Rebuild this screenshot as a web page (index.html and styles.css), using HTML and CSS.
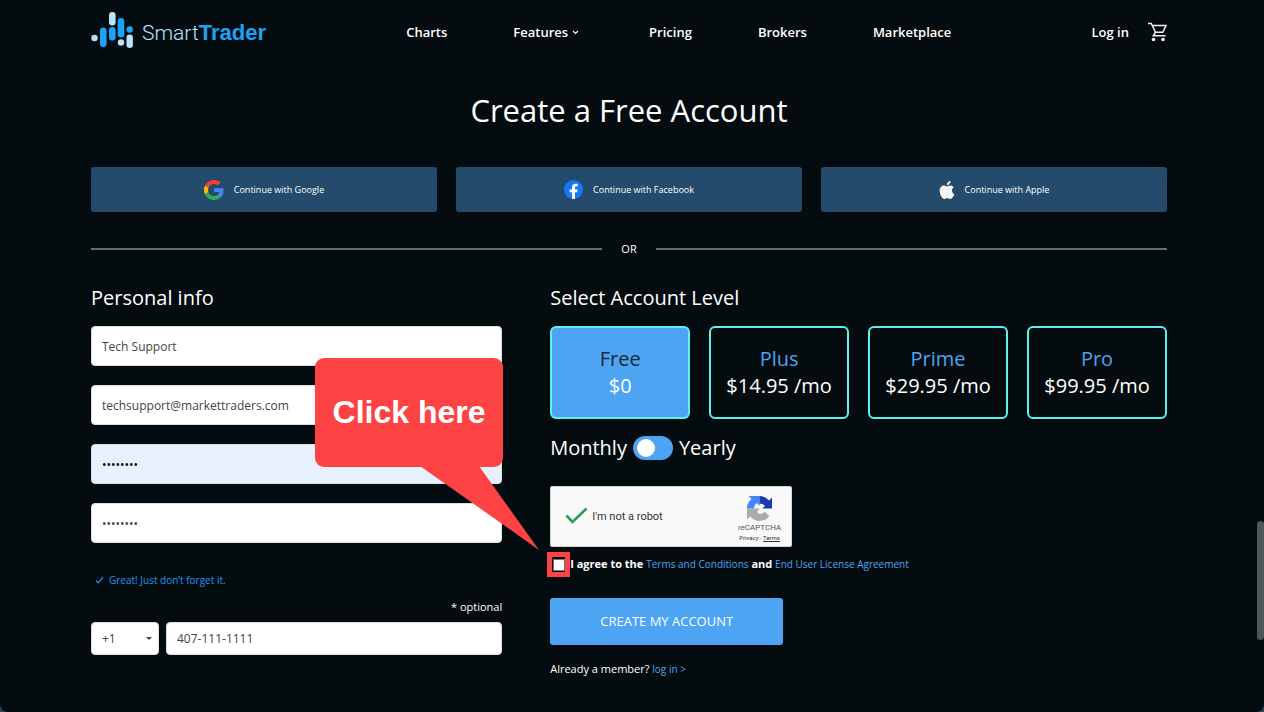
FILE: index.html
```html
<!DOCTYPE html>
<html lang="en">

<head>
    <meta charset="UTF-8">
    <meta name="viewport" content="width=device-width, initial-scale=1.0">
    <title>SmartTrader - Create a Free Account</title>
    <link rel="stylesheet" href="styles.css">
</head>

<body>

    <div class="page">
        <header class="header">
            <a href="#" class="logo">
                <svg width="42" height="36" viewBox="0 0 42 36" aria-hidden="true">
                    <g fill="#b9e2fd">
                        <circle cx="3.5" cy="26" r="3.2" />
                        <rect x="18" y="0" width="6.6" height="13.5" rx="3.3" />
                        <circle cx="30" cy="30.5" r="3.2" />
                        <rect x="35.5" y="22.5" width="6.4" height="13.5" rx="3.2" />
                    </g>
                    <g fill="#1ea1f8">
                        <rect x="9" y="15.5" width="6.6" height="19.5" rx="3.3" />
                        <rect x="18" y="15" width="6.6" height="13.5" rx="3.3" />
                        <rect x="26.7" y="6" width="6.6" height="19.5" rx="3.3" />
                        <circle cx="38.7" cy="17.5" r="3.2" />
                    </g>
                </svg>
                <span class="logo-text"><span class="logo-light">Smart</span><b>Trader</b></span>
            </a>
            <nav class="nav">
                <a href="#">Charts</a>
                <a href="#" class="has-menu">Features
                    <svg width="7" height="5" viewBox="0 0 7 5" aria-hidden="true"><path d="M1 1l2.5 2.5L6 1" fill="none" stroke="#fff" stroke-width="1.1" /></svg>
                </a>
                <a href="#">Pricing</a>
                <a href="#">Brokers</a>
                <a href="#">Marketplace</a>
            </nav>
            <div class="user-links">
                <a href="#">Log in</a>
                <a href="#" class="cart" aria-label="Cart">
                    <svg width="19" height="20" viewBox="0 0 19 20" fill="none" stroke="#f2f2f2" stroke-width="1.5" aria-hidden="true">
                        <path d="M0 1.5h3.3l4.2 8.800h7.300l3.200-6.800H4.300M7.300 10.500l-2 3.300h12.200" />
                        <circle cx="5.500" cy="17.500" r="1.800" fill="#f2f2f2" stroke="none" />
                        <circle cx="15" cy="17.500" r="1.800" fill="#f2f2f2" stroke="none" />
                    </svg>
                </a>
            </div>
        </header>

        <main class="main">
            <h1>Create a Free Account</h1>

            <div class="social">
                <button type="button">
                    <svg width="20" height="20" viewBox="0 0 48 48" aria-hidden="true">
                        <path fill="#ea4335" d="M24 9.500c3.540 0 6.710 1.220 9.210 3.600l6.850-6.850C35.900 2.380 30.470 0 24 0 14.620 0 6.510 5.380 2.560 13.220l7.980 6.190C12.430 13.720 17.740 9.500 24 9.500z" />
                        <path fill="#4285f4" d="M46.980 24.550c0-1.570-.15-3.090-.38-4.550H24v9.020h12.940c-.58 2.960-2.260 5.480-4.780 7.180l7.730 6c4.510-4.180 7.090-10.360 7.090-17.650z" />
                        <path fill="#fbbc05" d="M10.530 28.590A14.500 14.500 0 0 1 9.770 24c0-1.600.27-3.140.76-4.590l-7.980-6.190A23.900 23.900 0 0 0 0 24c0 3.880.92 7.540 2.560 10.780l7.970-6.190z" />
                        <path fill="#34a853" d="M24 48c6.480 0 11.930-2.130 15.890-5.810l-7.730-6c-2.150 1.450-4.920 2.300-8.160 2.300-6.260 0-11.570-4.220-13.470-9.910l-7.980 6.190C6.510 42.620 14.620 48 24 48z" />
                    </svg>
                    Continue with Google
                </button>
                <button type="button">
                    <svg width="19" height="19" viewBox="0 0 24 24" aria-hidden="true">
                        <circle cx="12" cy="12" r="12" fill="#1877f2" />
                        <path fill="#fff" d="M16.670 15.470l.53-3.470h-3.330V9.750c0-.95.470-1.880 1.960-1.880h1.510V4.920s-1.370-.24-2.690-.24c-2.740 0-4.530 1.660-4.530 4.670V12H7.080v3.470h3.050v8.390a12.100 12.100 0 0 0 3.750 0v-8.390h2.790z" />
                    </svg>
                    Continue with Facebook
                </button>
                <button type="button">
                    <svg width="16" height="18" viewBox="0 0 814 1000" aria-hidden="true">
                        <path fill="#f4f4f4" d="M788 341c-6 4-108 62-108 190 0 149 130 201 134 203-1 3-21 72-69 142-43 62-88 124-156 124s-86-40-165-40c-77 0-104 41-166 41s-106-57-156-127C44 792 0 667 0 548 0 357 124 256 247 256c65 0 119 43 160 43 39 0 100-45 174-45 28 0 130 2 197 97zM554 159c31-37 53-88 53-139 0-7-1-14-2-20-50 2-110 34-147 76-28 32-55 83-55 135 0 8 1 16 2 18 3 1 8 1 14 1 45 0 102-30 135-71z" />
                    </svg>
                    Continue with Apple
                </button>
            </div>

            <div class="divider">OR</div>

            <form class="columns">
                <section class="personal">
                    <h2>Personal info</h2>
                    <div class="fields">
                        <input type="text" aria-label="Name" value="Tech Support">
                        <input type="email" aria-label="Email" value="techsupport@markettraders.com">
                        <input type="password" class="filled" aria-label="Password" value="12345678">
                        <input type="password" aria-label="Confirm password" value="12345678">
                    </div>
                    <p class="hint">
                        <svg width="9" height="8" viewBox="0 0 9 8" aria-hidden="true"><path d="M1 4.500l2.200 2.300L8 1" fill="none" stroke="#2196f3" stroke-width="1.200" /></svg>
                        Great! Just don’t forget it.
                    </p>
                    <label class="optional" for="phone">* optional</label>
                    <div class="phone">
                        <select aria-label="Country code">
                            <option>+1</option>
                        </select>
                        <input type="tel" id="phone" value="407-111-1111">
                    </div>
                </section>

                <section class="account">
                    <h2>Select Account Level</h2>
                    <div class="levels">
                        <label class="level active">
                            <input type="radio" name="level" checked>
                            <span class="level-name">Free</span>
                            <span>$0</span>
                        </label>
                        <label class="level">
                            <input type="radio" name="level">
                            <span class="level-name">Plus</span>
                            <span>$14.95 /mo</span>
                        </label>
                        <label class="level">
                            <input type="radio" name="level">
                            <span class="level-name">Prime</span>
                            <span>$29.95 /mo</span>
                        </label>
                        <label class="level">
                            <input type="radio" name="level">
                            <span class="level-name">Pro</span>
                            <span>$99.95 /mo</span>
                        </label>
                    </div>

                    <div class="period">
                        <span>Monthly</span>
                        <input type="checkbox" class="switch" id="yearly">
                        <label for="yearly">Yearly</label>
                    </div>

                    <div class="captcha">
                        <label class="robot">
                            <input type="checkbox" checked>
                            <svg width="23" height="20" viewBox="0 0 23 20" aria-hidden="true"><path d="M1.500 8.500l6 6.500L21.500 1.500" fill="none" stroke="#2a9d5c" stroke-width="2.600" /></svg>
                            I'm not a robot
                        </label>
                        <div class="captcha-brand">
                            <svg width="25" height="25" viewBox="0 0 64 64" aria-hidden="true">
                                <path fill="#1c3aa9" d="M64 32V4l-7.700 7.700A32 32 0 0 0 31.600 0v20.400c3-.9 10.500-1.300 14.200 4.900L39 32z" />
                                <path fill="#4285f4" d="M31.900 0H4l7.700 7.700A32 32 0 0 0 0 32h18.700c-.4-3.800.5-10.400 6.300-13.900l7 7.400z" />
                                <path fill="#ababab" d="M0 31.900V60l7.700-7.700c13.500 15.900 37.500 14.700 49.200-.6L44.600 39.600c-4.700 8.200-14 8.300-19.300 1.300l6.900-9z" />
                            </svg>
                            <span class="brand-name">reCAPTCHA</span>
                            <span class="brand-links"><a href="#">Privacy</a> - <a href="#" class="terms">Terms</a></span>
                        </div>
                    </div>

                    <div class="agree">
                        <span class="agree-box"><input type="checkbox" id="agree"></span>
                        <p><label for="agree">I agree to the</label> <a href="#">Terms and Conditions</a> and <a href="#">End User License Agreement</a></p>
                    </div>

                    <button type="submit" class="submit">CREATE MY ACCOUNT</button>
                    <p class="member">Already a member? <a href="#">log in &gt;</a></p>
                </section>

                <!-- tooltip pointing at the agreement checkbox -->
                <div class="callout">
                    <div class="callout-text">Click here</div>
                    <svg class="callout-tail" width="119" height="84" viewBox="0 0 119 84" aria-hidden="true"><path d="M0 0h59l60 84z" fill="#fd4343" /></svg>
                </div>
            </form>
        </main>
        <div class="scroll-thumb"></div>
    </div>

</body>

</html>
```
FILE: styles.css
```css
* {
    margin: 0;
    padding: 0;
    box-sizing: border-box;
}

html {
    background: #2c4454;
}

body {
    font-family: "Open Sans", "Noto Sans", sans-serif;
    color: #fff;
    overflow: hidden;
}

a {
    color: #4ca4f3;
    text-decoration: none;
}

button,
input,
select {
    font-family: inherit;
}

svg {
    display: block;
    flex: none;
}

.page {
    min-height: 100vh;
    padding-right: 6px;
    background: #050c0f;
    border-radius: 0 0 8px 8px;
}

.header,
.main {
    width: 86%;
    max-width: 1076px;
    margin: 0 auto;
}

/* header */
.header {
    display: flex;
    align-items: center;
    height: 64px;
}

.header a {
    color: #fff;
    font-size: 13px;
    font-weight: 600;
}

.header .logo {
    display: flex;
    align-items: center;
    gap: 9px;
    height: 60px;
    align-self: flex-start;
}

.logo-text {
    padding-top: 6px;
    font-family: "Liberation Sans", Arial, sans-serif;
    font-size: 22px;
    color: #1ea1f8;
    font-weight: bold;
}

.logo-light {
    font-family: Roboto, sans-serif;
    font-size: 21px;
    font-weight: 300;
    color: #b9e2fd;
}

.nav {
    display: flex;
    flex: 1;
    justify-content: center;
    gap: 66px;
}

.has-menu {
    display: flex;
    align-items: center;
    gap: 4px;
    padding-right: 4px;
}

.user-links {
    display: flex;
    align-items: center;
    gap: 19px;
}

/* title */
h1 {
    padding: 24px 0 26px;
    font-size: 31px;
    line-height: 44px;
    font-weight: 400;
    text-align: center;
}

h2 {
    margin-bottom: 14px;
    font-size: 20px;
    line-height: 28px;
    font-weight: 400;
}

/* social buttons */
.social {
    display: grid;
    grid-template-columns: repeat(3, 1fr);
    gap: 19px;
    margin-top: 9px;
}

.social button {
    display: flex;
    align-items: center;
    justify-content: center;
    gap: 10px;
    height: 45px;
    border: none;
    border-radius: 3px;
    background: #244b6c;
    color: #fff;
    font-size: 9px;
    cursor: pointer;
}

.divider {
    display: flex;
    align-items: center;
    gap: 19px;
    margin: 29px 0 27px;
    font-size: 11px;
    line-height: 16px;
}

.divider::before,
.divider::after {
    content: "";
    flex: 1;
    height: 2px;
    background: #686c6d;
}

/* form */
.columns {
    position: relative;
    display: grid;
    grid-template-columns: 2fr 3fr;
    gap: 48px;
}

.fields {
    display: grid;
    gap: 19px;
}

.personal input,
.personal select {
    width: 100%;
    height: 40px;
    padding: 0 10px;
    border: 1px solid #dcdfe0;
    border-radius: 4px;
    background: #fff;
    color: #444;
    font-size: 12px;
}

.personal .filled {
    background: #e8effd;
    color: #000;
}

.hint {
    display: flex;
    align-items: center;
    gap: 5px;
    margin: 30px 0 12px 4px;
    color: #2196f3;
    font-size: 10px;
    line-height: 14px;
}

.optional {
    display: block;
    margin-bottom: 7px;
    font-size: 11px;
    line-height: 16px;
    text-align: right;
}

.phone {
    display: flex;
    gap: 7px;
}

.phone input,
.phone select {
    height: 33px;
}

.personal select {
    width: 68px;
    flex: none;
    appearance: none;
    background: #fff url("data:image/svg+xml,%3Csvg xmlns='http://www.w3.org/2000/svg' width='6' height='3'%3E%3Cpath d='M0 0h6L3 3z' fill='%23444'/%3E%3C/svg%3E") no-repeat right 6px center;
}

/* account level */
.levels {
    display: grid;
    grid-template-columns: repeat(4, 1fr);
    gap: 19px;
}

.level {
    display: flex;
    flex-direction: column;
    align-items: center;
    justify-content: center;
    height: 93px;
    padding-bottom: 2px;
    border: 2px solid #5df0ef;
    border-radius: 6px;
    font-size: 20px;
    line-height: 27px;
    white-space: nowrap;
    cursor: pointer;
}

.level input,
.robot input {
    position: absolute;
    opacity: 0;
}

.level-name {
    color: #4ca4f3;
}

.level.active {
    background: #4ca4f3;
}

.active .level-name {
    color: #1d2733;
}

.period {
    display: flex;
    align-items: center;
    gap: 6px;
    margin: 15px 0 24px;
    font-size: 20px;
    line-height: 28px;
}

.switch {
    display: flex;
    align-items: center;
    width: 40px;
    height: 24px;
    padding: 0 4px;
    appearance: none;
    border-radius: 12px;
    background: #4ca4f3;
}

.switch::before {
    content: "";
    width: 18px;
    height: 18px;
    border-radius: 50%;
    background: #fff;
}

/* recaptcha */
.captcha {
    display: flex;
    justify-content: space-between;
    width: 242px;
    height: 61px;
    padding: 0 10px 0 14px;
    border: 1px solid #d3d3d3;
    border-radius: 2px;
    background: #f9f9f9;
    color: #333;
    font-family: Roboto, sans-serif;
}

.robot {
    display: flex;
    align-items: center;
    gap: 4px;
    font-size: 11px;
}

.captcha-brand {
    display: flex;
    flex-direction: column;
    align-items: center;
    padding-top: 9px;
    color: #555;
}

.brand-name {
    font-size: 8px;
    line-height: 14px;
}

.brand-links {
    font-size: 6px;
    line-height: 6px;
}

.brand-links a {
    color: #333;
}

.brand-links .terms {
    text-decoration: underline;
}

/* agreement */
.agree {
    display: flex;
    align-items: center;
    height: 25px;
    margin: 5px 0 21px -3px;
    font-size: 11px;
    font-weight: 700;
}

.agree p {
    padding-bottom: 2px;
}

.agree a,
.member a {
    font-size: 10px;
    font-weight: 400;
}

.agree-box {
    display: flex;
    align-items: center;
    justify-content: center;
    width: 23px;
    height: 25px;
    border: 5px solid #fd4343;
}

.agree-box input {
    width: 12px;
    height: 12px;
    appearance: none;
    border: 1px solid #767676;
    background: #fff;
}

.submit {
    display: block;
    width: 233px;
    height: 47px;
    padding-bottom: 2px;
    border: none;
    border-radius: 3px;
    background: #4ca4f3;
    color: #fff;
    font-size: 13px;
    cursor: pointer;
}

.member {
    margin-top: 16px;
    font-size: 11px;
    line-height: 16px;
}

/* callout */
.callout {
    position: absolute;
    left: 224px;
    top: 74px;
}

.callout-text {
    width: 188px;
    border-radius: 9px;
    background: #fd4343;
    font-family: "Liberation Sans", Arial, sans-serif;
    font-size: 32px;
    font-weight: 700;
    line-height: 109px;
    text-align: center;
}

.callout-tail {
    position: absolute;
    left: 105px;
    top: 108px;
}

.scroll-thumb {
    position: fixed;
    right: 0;
    top: 521px;
    width: 7px;
    height: 119px;
    border-radius: 4px;
    background: #4f5657;
}
```
